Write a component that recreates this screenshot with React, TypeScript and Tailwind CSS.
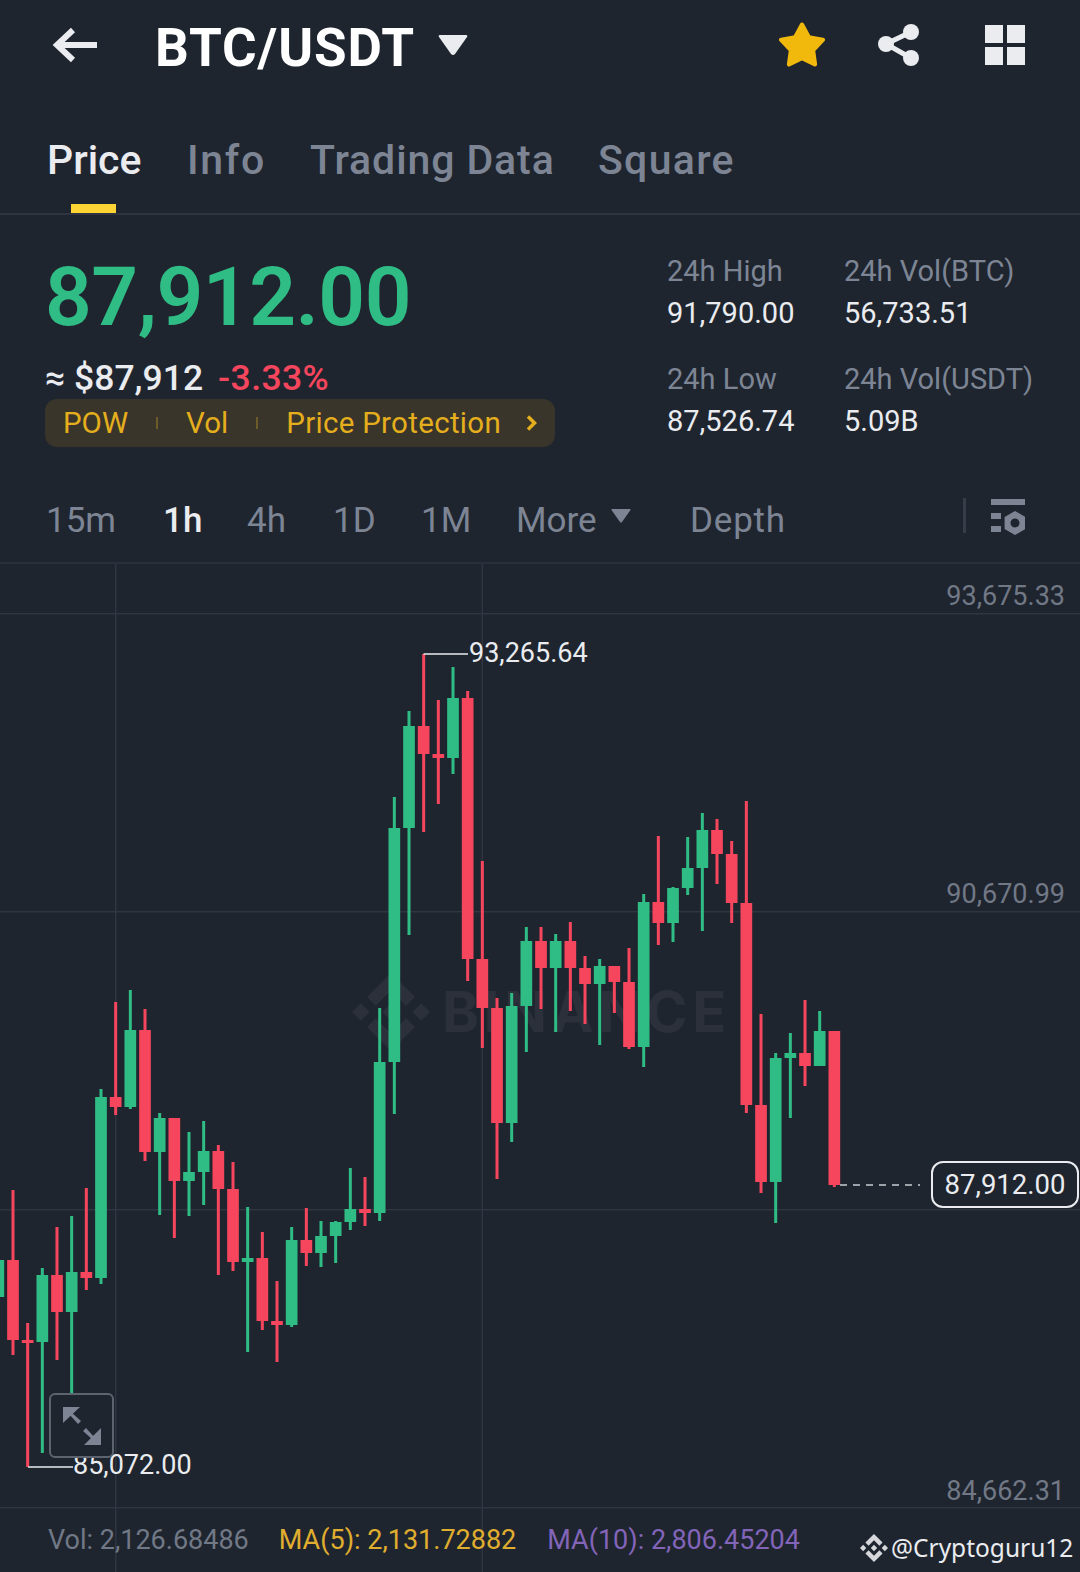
const UP = "#2fbd85"
const DOWN = "#f6465d"

// [wickTop, bodyTop, bodyBottom, wickBottom, isUp] in page pixels
const CANDLES: [number, number, number, number, boolean][] = [
  [1258, 1260, 1297, 1297, true],
  [1190, 1260, 1340, 1355, false],
  [1323, 1340, 1343, 1467, false],
  [1268, 1275, 1342, 1453, true],
  [1227, 1275, 1312, 1360, false],
  [1216, 1272, 1312, 1400, true],
  [1188, 1272, 1278, 1290, false],
  [1089, 1097, 1278, 1284, true],
  [1002, 1097, 1107, 1115, false],
  [990, 1030, 1107, 1109, true],
  [1009, 1030, 1152, 1161, false],
  [1113, 1118, 1152, 1215, true],
  [1118, 1118, 1181, 1238, false],
  [1132, 1172, 1181, 1216, true],
  [1121, 1151, 1172, 1205, true],
  [1145, 1151, 1189, 1275, false],
  [1162, 1189, 1262, 1271, false],
  [1207, 1258, 1262, 1352, true],
  [1232, 1258, 1321, 1330, false],
  [1281, 1321, 1325, 1362, false],
  [1227, 1240, 1325, 1327, true],
  [1208, 1240, 1253, 1266, false],
  [1221, 1236, 1253, 1267, true],
  [1221, 1222, 1236, 1263, true],
  [1168, 1209, 1222, 1230, true],
  [1177, 1209, 1213, 1226, false],
  [1008, 1062, 1213, 1221, true],
  [797, 828, 1062, 1114, true],
  [711, 726, 828, 935, true],
  [654, 726, 754, 832, false],
  [700, 754, 758, 804, false],
  [667, 698, 758, 774, true],
  [691, 698, 959, 981, false],
  [861, 959, 1008, 1048, false],
  [998, 1008, 1123, 1179, false],
  [993, 1006, 1123, 1142, true],
  [927, 941, 1006, 1052, true],
  [927, 941, 968, 1009, false],
  [934, 941, 968, 1032, true],
  [922, 941, 968, 1011, false],
  [956, 968, 984, 1024, false],
  [959, 966, 984, 1045, true],
  [966, 966, 982, 1013, false],
  [948, 982, 1047, 1049, false],
  [894, 902, 1047, 1067, true],
  [836, 902, 923, 945, false],
  [887, 888, 923, 942, true],
  [837, 868, 888, 895, true],
  [813, 830, 868, 931, true],
  [819, 830, 854, 884, false],
  [841, 854, 903, 923, false],
  [801, 903, 1105, 1113, false],
  [1014, 1105, 1182, 1193, false],
  [1053, 1058, 1182, 1223, true],
  [1033, 1053, 1058, 1118, true],
  [1000, 1053, 1066, 1086, false],
  [1011, 1031, 1066, 1066, true],
  [1031, 1031, 1185, 1187, false],
]

const BINANCE_PATH =
  "M16.624 13.9202l2.7175 2.7154-7.353 7.353-7.353-7.352 2.7175-2.7164 4.6355 4.6595 4.6356-4.6595zm4.6366-4.6366L24 12l-2.7154 2.7164L18.5682 12l2.6924-2.7164zm-9.272.001l2.7163 2.6914-2.7164 2.7174v-.001L9.2721 12l2.7164-2.7154zm-9.2722-.001L5.4088 12l-2.6914 2.6914L0 12l2.7164-2.7164zM11.9885.0115l7.353 7.329-2.7174 2.7154-4.6356-4.6356-4.6355 4.6595-2.7174-2.7154 7.353-7.353z"

function BinanceMark({ className }: { className: string }) {
  return (
    <svg viewBox="0 0 24 24" className={className} fill="currentColor">
      <path d={BINANCE_PATH} />
    </svg>
  )
}

function Header() {
  return (
    <div className="flex h-[96px] items-center pb-[6px] pl-[52px] text-[#eaecef]">
      <svg viewBox="0 0 46 36" className="h-[36px] w-[46px]" fill="none" stroke="currentColor" strokeWidth="6">
        <path d="M45 18H6" />
        <path d="M21 3 5 18l16 15" />
      </svg>
      <span className="ml-[57px] mt-[6px] text-[53px] font-bold leading-none tracking-[0.9px] text-white">BTC/USDT</span>
      <svg viewBox="0 0 30 22" className="ml-[23px] h-[22px] w-[30px]" fill="currentColor">
        <path d="M2 1h26q2 0 1 2L17 20q-2 2-4 0L1 3Q0 1 2 1z" />
      </svg>
      <svg viewBox="2 3 42 41" className="ml-auto h-[46px] w-[46px]" fill="#f0b90b" stroke="#f0b90b" strokeWidth="4" strokeLinejoin="round">
        <path d="M23 5 29.200 16.500 42 18.800 33 28.200 34.800 41.200 23 35.500 11.200 41.200 13 28.200 4 18.800 16.800 16.500Z" />
      </svg>
      <svg viewBox="0 0 46 46" className="ml-[50px] h-[46px] w-[46px]" fill="currentColor">
        <path d="M36 10 11 22l25 14" fill="none" stroke="currentColor" strokeWidth="5" />
        <circle cx="36" cy="10" r="8" />
        <circle cx="11" cy="22" r="8" />
        <circle cx="36" cy="36" r="8" />
      </svg>
      <div className="ml-[64px] mr-[55px] grid grid-cols-2 gap-[4px]">
        <div className="size-[18px] bg-[#eaecef]" />
        <div className="size-[18px] bg-[#eaecef]" />
        <div className="size-[18px] bg-[#eaecef]" />
        <div className="size-[18px] bg-[#eaecef]" />
      </div>
    </div>
  )
}

function Tabs() {
  return (
    <div className="flex h-[119px] items-start border-b-2 border-[#2e3440] pl-[47px] pt-[37px] text-[41px] font-medium leading-[54px] text-[#7d8595]">
      <div className="relative h-[80px] w-[140px] tracking-[0px] text-[#eaecef]">
        Price
        <div className="absolute bottom-0 left-[24px] h-[9px] w-[45px] bg-[#fcd535]" />
      </div>
      <div className="w-[123px] tracking-[1.700px]">Info</div>
      <div className="w-[288px] tracking-[0.900px]">Trading Data</div>
      <div className="tracking-[1.300px]">Square</div>
    </div>
  )
}

function Stat({ label, value }: { label: string; value: string }) {
  return (
    <div>
      <div className="text-[29px] leading-[42px] text-[#7d8595]">{label}</div>
      <div className="text-[29px] leading-[42px] text-[#eaecef]">{value}</div>
    </div>
  )
}

function Summary() {
  return (
    <div className="flex h-[265px] pt-[33px]">
      <div className="w-[667px] pl-[45px]">
        <div className="mt-[3px] text-[82px] font-semibold leading-[92px] tracking-[-0.5px] text-[#2fbd85]">87,912.00</div>
        <div className="mt-[13px] flex items-center text-[35.500px] font-medium leading-[44px]">
          <span className="text-[#eaecef]">≈ $87,912</span>
          <span className="ml-[15px] tracking-[0.400px] text-[#f6465d]">-3.33%</span>
        </div>
        <div className="-mt-[1px] flex h-[48px] w-[510px] items-center rounded-[12px] bg-[#39352a] pl-[18px] text-[29.500px] text-[#e5ae1d]">
          <span>POW</span>
          <div className="mx-[28px] h-[12px] w-[2px] bg-[#6b5c2a]" />
          <span>Vol</span>
          <div className="mx-[28px] h-[12px] w-[2px] bg-[#6b5c2a]" />
          <span className="tracking-[0.300px]">Price Protection</span>
          <svg viewBox="0 0 11 16" className="ml-[25px] h-[16px] w-[11px]" fill="none" stroke="currentColor" strokeWidth="3.500">
            <path d="M2 1.500 8.500 8 2 14.500" />
          </svg>
        </div>
      </div>
      <div className="mt-[2px] grid grid-cols-[177px_1fr] content-start gap-y-[24px]">
        <Stat label="24h High" value="91,790.00" />
        <Stat label="24h Vol(BTC)" value="56,733.51" />
        <Stat label="24h Low" value="87,526.74" />
        <Stat label="24h Vol(USDT)" value="5.09B" />
      </div>
    </div>
  )
}

function Intervals() {
  return (
    <div className="flex h-[82px] items-center pl-[46px] pr-[55px] text-[35px] text-[#7d8595]">
      <span className="w-[117px]">15m</span>
      <span className="w-[84px] font-medium text-[#eaecef]">1h</span>
      <span className="w-[86px]">4h</span>
      <span className="w-[88px]">1D</span>
      <span className="w-[95px]">1M</span>
      <span className="w-[95px]">More</span>
      <svg viewBox="0 0 20 14" className="mb-[10px] h-[14px] w-[20px]" fill="currentColor">
        <path d="M1 0h18q1 0 .500 1L11 13q-1 1-2 0L.500 1Q0 0 1 0z" />
      </svg>
      <span className="ml-[59px] tracking-[0.800px]">Depth</span>
      <div className="mb-[11px] ml-auto h-[35px] w-[3px] bg-[#363c48]" />
      <svg viewBox="0 0 34 36" className="mb-[8px] ml-[25px] h-[36px] w-[34px]" fill="currentColor">
        <rect x="0" y="0" width="34" height="6" />
        <rect x="0" y="14" width="10" height="6" />
        <rect x="0" y="27" width="10" height="6" />
        <path fillRule="evenodd" d="M24 12l10.400 6v12L24 36l-10.400-6V18zM24 19.500a4.500 4.500 0 1 0 0 9 4.500 4.500 0 0 0 0-9z" />
      </svg>
    </div>
  )
}

function ChartLines() {
  return (
    <svg viewBox="0 564 1080 1008" className="absolute inset-0 h-full w-full">
      {[613, 911, 1209, 1507].map((y) => (
        <rect key={y} x="0" y={y} width="1080" height="1.500" fill="#2f3541" />
      ))}
      {[115, 481.500].map((x) => (
        <rect key={x} x={x} y="564" width="1.500" height="1008" fill="#2f3541" />
      ))}
    </svg>
  )
}

function Candles() {
  return (
    <svg viewBox="0 564 1080 1008" className="absolute inset-0 h-full w-full">
      {CANDLES.map(([wickTop, bodyTop, bodyBottom, wickBottom, isUp], index) => {
        const x = -1.67 + index * 14.667
        const color = isUp ? UP : DOWN
        return (
          <g key={index} fill={color}>
            <rect x={x - 1.500} y={wickTop} width="3" height={wickBottom - wickTop} />
            <rect x={x - 5.850} y={bodyTop} width="11.700" height={bodyBottom - bodyTop} />
          </g>
        )
      })}
      <path d="M423.500 654H468" stroke="#eaecef" strokeWidth="1.500" />
      <path d="M28 1467H73" stroke="#eaecef" strokeWidth="1.500" />
      <path d="M840 1185H920" stroke="#c9ccd2" strokeWidth="1.500" strokeDasharray="7 6" />
    </svg>
  )
}

function Chart() {
  return (
    <div className="relative flex h-[1010px] flex-col overflow-hidden border-t-2 border-[#2a303b] font-['Roboto',sans-serif]">
      <ChartLines />
      {/* watermark sits behind the candles */}
      <div className="absolute left-[352px] top-[409px] flex items-center text-[#2b303b]">
        <BinanceMark className="size-[78px]" />
        <span className="ml-[12px] font-['Inter',sans-serif] text-[56px] font-bold leading-none tracking-[4.800px]">BINANCE</span>
      </div>
      <Candles />

      <div className="relative flex-1">
        <span className="absolute right-[15px] top-[15px] text-[27px] leading-[34px] text-[#717886]">93,675.33</span>
        <span className="absolute right-[15px] top-[313px] text-[27px] leading-[34px] text-[#717886]">90,670.99</span>
        <span className="absolute right-[15px] top-[910px] text-[27px] leading-[34px] text-[#717886]">84,662.31</span>
        <span className="absolute left-[469px] top-[72px] text-[27px] leading-[34px] text-[#eaecef]">93,265.64</span>
        <span className="absolute left-[73px] top-[884px] text-[27px] leading-[34px] text-[#eaecef]">85,072.00</span>
        <div className="absolute left-[931px] top-[597px] flex h-[47px] w-[148px] items-center justify-center rounded-[12px] border-2 border-[#eaecef] bg-[#1f252f] text-[27.500px] text-[#eaecef]">
          87,912.00
        </div>
        <div className="absolute left-[49px] top-[829px] flex size-[65px] items-center justify-center rounded-[6px] border-2 border-[#5d6470] bg-[#1f252f]">
          <svg viewBox="0 0 40 40" className="size-[40px]" fill="#7d8595" stroke="none">
            <path d="M1 1h17L1 17z" />
            <path d="M39 39H22l17-17z" />
            <path d="M9 6l10 9-3 3-9-10zM31 34l-10-9 3-3 9 10z" />
          </svg>
        </div>
      </div>

      <div className="relative flex h-[63px] shrink-0 pl-[48px] pt-[13px] text-[27px] leading-[36px]">
        <span className="text-[#717886]">Vol: 2,126.68486</span>
        <span className="ml-[30px] text-[#e0ae2e]">MA(5): 2,131.72882</span>
        <span className="ml-[31px] text-[#8264b8]">MA(10): 2,806.45204</span>
        <div className="absolute bottom-[6px] left-[860px] flex items-center text-[#eaecef]">
          <BinanceMark className="size-[28px] text-[#d5d7db]" />
          <span className="ml-[3px] font-['Noto_Sans',sans-serif] text-[24.500px] leading-[36px]">@Cryptoguru12</span>
        </div>
      </div>
    </div>
  )
}

export default function App() {
  return (
    <div className="h-[1572px] w-[1080px] overflow-hidden bg-[#1f252f] font-['Roboto',sans-serif]">
      <Header />
      <Tabs />
      <Summary />
      <Intervals />
      <Chart />
    </div>
  )
}
